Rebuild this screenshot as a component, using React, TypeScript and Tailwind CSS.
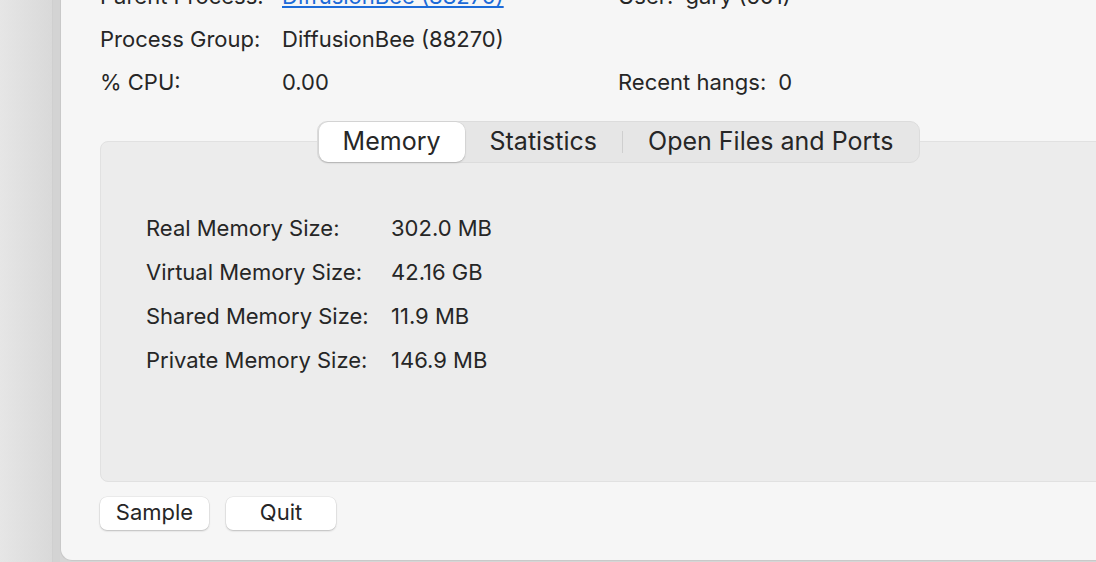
import React from "react";

const font = { fontFamily: "Inter, 'Noto Sans', sans-serif" };

const infoRows = [
  { label: "Parent Process:", value: "DiffusionBee (88270)", link: true, rLabel: "User:", rValue: "gary (501)" },
  { label: "Process Group:", value: "DiffusionBee (88270)" },
  { label: "% CPU:", value: "0.00", rLabel: "Recent hangs:", rValue: "0" },
];

const memoryRows = [
  ["Real Memory Size:", "302.0 MB"],
  ["Virtual Memory Size:", "42.16 GB"],
  ["Shared Memory Size:", "11.9 MB"],
  ["Private Memory Size:", "146.9 MB"],
];

export default function App() {
  return (
    <div className="flex h-[562px] w-[1096px] overflow-hidden bg-[#d6d6d6] text-[#262626]" style={font}>
      <div className="w-[52px] shrink-0 bg-gradient-to-r from-[#e6e6e6] to-[#d9d9d9]" />
      <div className="w-[8px] shrink-0 border-l border-[#cfcfcf] bg-[#d3d3d3]" />
      <div className="flex h-[561px] w-[1100px] shrink-0 flex-col rounded-bl-[12px] border-l border-b border-[#c9c9c9] bg-[#f6f6f6] pl-[39px]">
        <div className="mt-[-25px] flex flex-col text-[22px]">
          {infoRows.map((r) => (
            <div key={r.label} className="flex h-[43px] items-center">
              <span className="w-[182px] shrink-0">{r.label}</span>
              <span className={`w-[336px] shrink-0 ${r.link ? "text-[#1d6bd8] underline underline-offset-2" : ""}`}>{r.value}</span>
              {r.rLabel && (
                <span className="flex gap-[12px]">
                  <span>{r.rLabel}</span>
                  <span>{r.rValue}</span>
                </span>
              )}
            </div>
          ))}
        </div>

        <div className="mt-[17px] flex w-[1037px] flex-col">
          <div className="relative z-10 flex justify-center">
            <div className="flex h-[42px] items-center rounded-[10px] border border-[#dcdcdc] bg-[#e6e6e6] px-[1px] text-[25px]">
              <div className="flex h-[40px] items-center rounded-[9px] bg-white px-[24px] shadow-[0_1px_2px_rgba(0,0,0,0.18),0_0_0_0.5px_rgba(0,0,0,0.06)]">
                Memory
              </div>
              <div className="flex h-[40px] items-center px-[25px]">Statistics</div>
              <div className="h-[22px] w-[1px] bg-[#cfcfcf]" />
              <div className="flex h-[40px] items-center px-[25px]">Open Files and Ports</div>
            </div>
          </div>
          <div className="-mt-[22px] flex h-[341px] flex-col rounded-[8px] border border-[#e1e1e1] bg-[#ececec] pl-[45px] pt-[64px] text-[22px]">
            {memoryRows.map(([l, v]) => (
              <div key={l} className="flex h-[44px] items-center">
                <span className="w-[245px] shrink-0">{l}</span>
                <span>{v}</span>
              </div>
            ))}
          </div>
        </div>

        <div className="mt-[15px] flex gap-[17px] text-[22px]">
          <button className="flex h-[33px] w-[109px] items-center justify-center rounded-[7px] bg-white pb-[2px] shadow-[0_1px_2px_rgba(0,0,0,0.2),0_0_0_0.5px_rgba(0,0,0,0.08)]">
            Sample
          </button>
          <button className="flex h-[33px] w-[110px] items-center justify-center rounded-[7px] bg-white pb-[2px] shadow-[0_1px_2px_rgba(0,0,0,0.2),0_0_0_0.5px_rgba(0,0,0,0.08)]">
            Quit
          </button>
        </div>
      </div>
    </div>
  );
}
